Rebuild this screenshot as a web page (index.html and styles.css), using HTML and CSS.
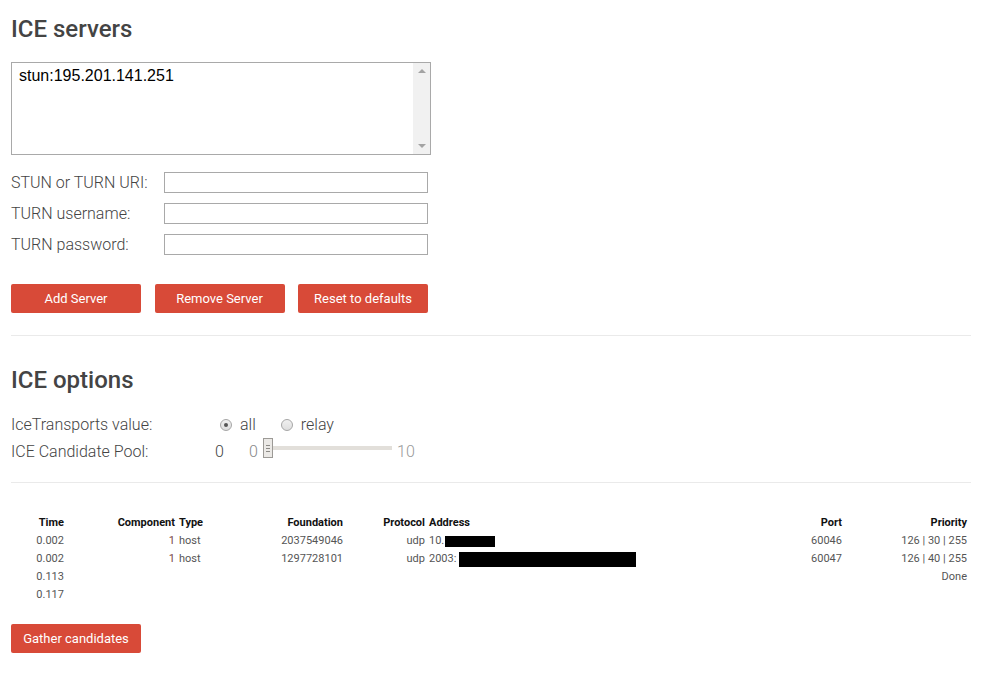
FILE: index.html
```html
<!DOCTYPE html>
<html>
<head>
<meta charset="utf-8">
<title>Trickle ICE</title>
<link rel="stylesheet" href="styles.css">
</head>
<body>
<div class="page">
  <section class="servers">
    <h2 class="title">ICE servers</h2>
    <div class="listbox">
      <textarea class="list" readonly>stun:195.201.141.251</textarea>
      <div class="scrollbar">
        <span class="arrow up"></span>
        <span class="arrow down"></span>
      </div>
    </div>
    <div class="fields">
      <div class="field"><label class="label">STUN or TURN URI:</label><input class="text" type="text"></div>
      <div class="field"><label class="label">TURN username:</label><input class="text" type="text"></div>
      <div class="field"><label class="label">TURN password:</label><input class="text" type="password"></div>
    </div>
    <div class="buttons">
      <button class="btn">Add Server</button>
      <button class="btn">Remove Server</button>
      <button class="btn">Reset to defaults</button>
    </div>
  </section>
  <hr class="rule">
  <section class="options">
    <h2 class="title">ICE options</h2>
    <div class="opt transports">
      <span class="opt-label">IceTransports value:</span>
      <span class="radio checked"></span><span class="radio-text">all</span>
      <span class="radio"></span><span class="radio-text">relay</span>
    </div>
    <div class="opt pool">
      <span class="opt-label">ICE Candidate Pool:</span>
      <span class="pool-value">0</span>
      <span class="pool-min">0</span>
      <div class="slider">
        <div class="thumb"><span></span><span></span><span></span></div>
        <div class="track"></div>
      </div>
      <span class="pool-max">10</span>
    </div>
  </section>
  <hr class="rule second">
  <table class="candidates">
    <colgroup>
      <col class="c-time"><col class="c-comp"><col class="c-type"><col class="c-found"><col class="c-proto"><col class="c-addr"><col class="c-port"><col class="c-prio">
    </colgroup>
    <thead>
      <tr><th>Time</th><th>Component</th><th class="left">Type</th><th>Foundation</th><th>Protocol</th><th class="left">Address</th><th>Port</th><th>Priority</th></tr>
    </thead>
    <tbody>
      <tr><td>0.002</td><td class="comp">1</td><td class="left">host</td><td>2037549046</td><td>udp</td><td class="left">10.<span class="redact r1"></span></td><td>60046</td><td>126 | 30 | 255</td></tr>
      <tr><td>0.002</td><td class="comp">1</td><td class="left">host</td><td>1297728101</td><td>udp</td><td class="left">2003:<span class="redact r2"></span></td><td>60047</td><td>126 | 40 | 255</td></tr>
      <tr><td>0.113</td><td></td><td></td><td></td><td></td><td></td><td></td><td>Done</td></tr>
      <tr><td>0.117</td><td></td><td></td><td></td><td></td><td></td><td></td><td></td></tr>
    </tbody>
  </table>
  <button class="btn gather">Gather candidates</button>
</div>
</body>
</html>
```

FILE: styles.css
```css
html, body {
  margin: 0;
  padding: 0;
  background: #fff;
}
body {
  font-family: Roboto, "Liberation Sans", sans-serif;
  font-weight: 300;
  color: #444;
}
.page {
  width: 960px;
  padding: 0 11px;
}
.title {
  font-size: 24px;
  font-weight: 500;
  line-height: 36px;
  color: #444;
  margin: 11px 0 15px;
}
.listbox {
  display: flex;
  width: 420px;
  height: 93px;
  box-sizing: border-box;
  border: 1px solid #a9a9a9;
}
.list {
  flex: 1;
  border: none;
  outline: none;
  resize: none;
  margin: 0;
  padding: 4px 7px 0;
  font-family: "Liberation Sans", Arial, sans-serif;
  font-size: 16px;
  line-height: 18px;
  color: #000;
  background: #fff;
  overflow: hidden;
}
.scrollbar {
  width: 17px;
  background: #f1f1f1;
  display: flex;
  flex-direction: column;
  justify-content: space-between;
  align-items: center;
  padding: 6px 0 6px;
  box-sizing: border-box;
}
.arrow {
  width: 0;
  height: 0;
  border-left: 4px solid transparent;
  border-right: 4px solid transparent;
}
.arrow.up {
  border-bottom: 4px solid #a3a3a3;
}
.arrow.down {
  border-top: 4px solid #a3a3a3;
}
.fields {
  margin-top: 17px;
  display: flex;
  flex-direction: column;
  gap: 10px;
}
.field {
  display: flex;
  align-items: center;
  height: 21px;
}
.label {
  width: 153px;
  font-size: 16px;
  line-height: 21px;
}
.text {
  width: 264px;
  height: 21px;
  box-sizing: border-box;
  border: 1px solid #a9a9a9;
  margin: 0;
  padding: 1px 3px;
  font-size: 13px;
  outline: none;
}
.buttons {
  margin-top: 29px;
  display: flex;
  gap: 13.5px;
}
.btn {
  width: 130px;
  height: 29px;
  border: none;
  border-radius: 2px;
  background: #d84a38;
  color: #fff;
  font-family: Roboto, "Liberation Sans", sans-serif;
  font-weight: 400;
  font-size: 13px;
  padding: 0;
  margin: 0;
  cursor: pointer;
}
.rule {
  border: none;
  border-top: 1px solid #eaeaea;
  margin: 22px 0 26px;
  height: 0;
}
.rule.second {
  margin: 20px 0 31px;
}
.options .title {
  margin: 0 0 17px;
}
.opt {
  display: flex;
  align-items: center;
  height: 20px;
  font-size: 16px;
  line-height: 20px;
}
.pool {
  margin-top: 7px;
}
.opt-label {
  width: 204px;
}
.radio {
  width: 12px;
  height: 12px;
  box-sizing: border-box;
  border-radius: 50%;
  border: 1px solid #a6a6a6;
  background: linear-gradient(#f0f0f0, #dedede);
  margin: 0 8px 0 5px;
  display: flex;
  align-items: center;
  justify-content: center;
}
.radio.checked::after {
  content: "";
  width: 4px;
  height: 4px;
  border-radius: 50%;
  background: #555;
}
.radio-text {
  margin-right: 20px;
}
.pool-value {
  color: #444;
  width: 34px;
}
.pool-min {
  color: #888;
  width: 14px;
}
.slider {
  display: flex;
  align-items: center;
  margin-bottom: 8px;
  height: 20px;
}
.thumb {
  width: 10px;
  height: 20px;
  box-sizing: border-box;
  border: 1px solid #9c9a96;
  background: #ebe9e6;
  display: flex;
  flex-direction: column;
  align-items: center;
  justify-content: center;
  gap: 2px;
}
.thumb span {
  width: 4px;
  height: 1px;
  background: #8c8a86;
}
.track {
  width: 119px;
  height: 4px;
  background: #e2dfda;
}
.pool-max {
  color: #999;
  margin-left: 5px;
}
.candidates {
  table-layout: fixed;
  border-collapse: collapse;
  width: 958px;
  font-size: 11px;
  line-height: 18px;
}
.c-time { width: 55px; }
.c-comp { width: 111px; }
.c-type { width: 29px; }
.c-found { width: 139px; }
.c-proto { width: 82px; }
.c-addr { width: 347px; }
.c-port { width: 70px; }
.c-prio { width: 125px; }
.candidates th,
.candidates td {
  padding: 0 2px;
  height: 18px;
  text-align: right;
  white-space: nowrap;
  overflow: visible;
}
.candidates th {
  font-weight: 700;
  color: #111;
}
.candidates td {
  font-weight: 400;
  color: #555;
}
.candidates .left {
  text-align: left;
}
.candidates td.comp {
  color: #7a4848;
}
.redact {
  display: inline-block;
  background: #000;
  vertical-align: middle;
}
.r1 {
  width: 50px;
  height: 11px;
  margin-left: 1px;
}
.r2 {
  width: 177px;
  height: 15px;
  margin-left: 3px;
}
.gather {
  margin-top: 20px;
}
```
